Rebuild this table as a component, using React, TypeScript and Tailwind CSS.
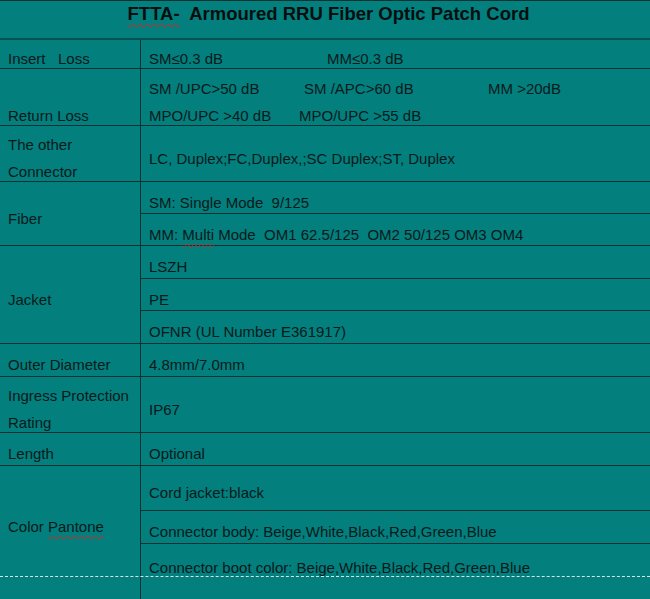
import type { ReactNode } from 'react';

const line = 'border-[#0c3131]';

// one cell of text, nudged down a bit like the Word table it comes from
const Cell = ({ children, className = '' }: { children: ReactNode; className?: string }) => (
  <div className={`flex min-h-0 items-center pt-[9px] leading-[27px] ${className}`}>
    <div>{children}</div>
  </div>
);

const Row = ({
  label,
  height,
  children,
  last = false,
}: {
  label: ReactNode;
  height: string;
  children: ReactNode;
  last?: boolean;
}) => (
  <div className={`flex ${height} ${last ? '' : `border-b ${line}`}`}>
    <Cell className={`w-[141px] shrink-0 pl-2 border-r ${line}`}>{label}</Cell>
    <div className="flex-1 min-h-0 flex flex-col">{children}</div>
  </div>
);

// spell-check squiggle
const Squiggle = ({ children }: { children: ReactNode }) => (
  <span className="underline decoration-wavy decoration-[#e02020] decoration-[1.2px] underline-offset-[3px] [text-decoration-skip-ink:none]">
    {children}
  </span>
);

const App = () => {
  return (
    <div
      className="relative w-[650px] h-[599px] overflow-hidden bg-[#037f7e] text-[#081a1a] text-[15px]"
      style={{ fontFamily: '"Liberation Sans", Arial, sans-serif' }}
    >
      {/* title */}
      <div className={`h-[40px] border-t ${line} border-b-2 border-b-[#0b5050] pl-[7px] pt-[2px] text-center font-bold text-[18.5px] leading-[22px] whitespace-pre text-[#030f0f]`}>
        <Squiggle>FTTA-</Squiggle>  Armoured RRU Fiber Optic Patch Cord
      </div>

      <Row label={<span className="whitespace-pre">Insert   Loss</span>} height="h-[29px]">
        <Cell className="flex-1 pl-2">
          <span className="inline-block w-[178px]">SM≤0.3 dB</span>
          <span>MM≤0.3 dB</span>
        </Cell>
      </Row>

      <Row
        label={<div className="pt-[28px]">Return Loss</div>}
        height="h-[57px]"
      >
        <Cell className="flex-1 pl-2">
          <div>
            <span className="inline-block w-[155px]">SM /UPC&gt;50 dB</span>
            <span className="inline-block w-[184px]">SM /APC&gt;60 dB</span>
            <span>MM &gt;20dB</span>
          </div>
          <div>
            <span className="inline-block w-[150px]">MPO/UPC &gt;40 dB</span>
            <span>MPO/UPC &gt;55 dB</span>
          </div>
        </Cell>
      </Row>

      <Row
        label={
          <>
            <div>The other</div>
            <div>Connector</div>
          </>
        }
        height="h-[56px]"
      >
        <Cell className="flex-1 pl-2">LC, Duplex;FC,Duplex,;SC Duplex;ST, Duplex</Cell>
      </Row>

      <Row label="Fiber" height="h-[64px]">
        <Cell className={`h-[32px] pl-2 border-b ${line}`}>SM: Single Mode&nbsp;&nbsp;9/125</Cell>
        <Cell className="flex-1 pl-2">
          <span className="whitespace-pre">
            MM: <Squiggle>Multi</Squiggle> Mode  OM1 62.5/125  OM2 50/125 OM3 OM4
          </span>
        </Cell>
      </Row>

      <Row label="Jacket" height="h-[98px]">
        <Cell className={`h-[33px] pl-2 border-b ${line}`}>LSZH</Cell>
        <Cell className={`h-[32px] pl-2 border-b ${line}`}>PE</Cell>
        <Cell className="flex-1 pl-2">OFNR (UL Number E361917)</Cell>
      </Row>

      <Row label="Outer Diameter" height="h-[33px]">
        <Cell className="flex-1 pl-2">4.8mm/7.0mm</Cell>
      </Row>

      <Row
        label={
          <>
            <div>Ingress Protection</div>
            <div>Rating</div>
          </>
        }
        height="h-[56px]"
      >
        <Cell className="flex-1 pl-2">IP67</Cell>
      </Row>

      <Row label="Length" height="h-[33px]">
        <Cell className="flex-1 pl-2">Optional</Cell>
      </Row>

      <Row
        label={
          <div className="-mt-[38px]">
            Color <Squiggle>Pantone</Squiggle>
          </div>
        }
        height="h-[160px]"
        last
      >
        <Cell className={`h-[45px] pl-2 border-b ${line}`}>Cord jacket:black</Cell>
        <Cell className={`h-[33px] pl-2 border-b ${line}`}>
          Connector body: Beige,White,Black,Red,Green,Blue
        </Cell>
        <div className="flex-1 pl-2 pt-[10px] leading-[27px]">
          Connector boot color: Beige,White,Black,Red,Green,Blue
        </div>
      </Row>

      {/* page break marker */}
      <div className="absolute left-0 right-0 top-[576px] border-t border-dashed border-[#d8e4e4]" />
    </div>
  );
};

export default App;
